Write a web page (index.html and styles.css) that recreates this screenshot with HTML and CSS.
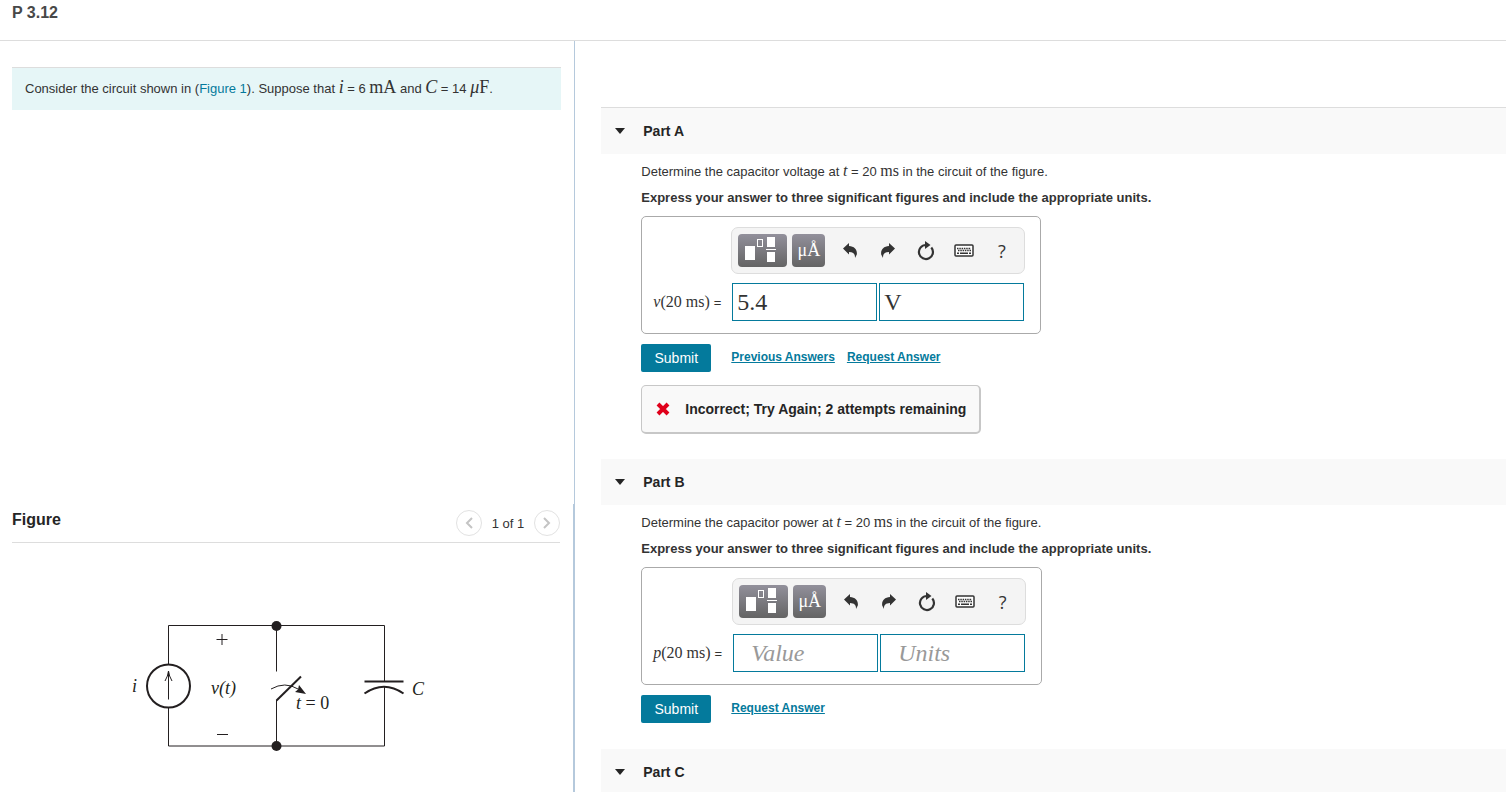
FILE: index.html
```html
<!DOCTYPE html>
<html lang="en">
<head>
    <meta charset="UTF-8">
    <meta name="viewport" content="width=device-width, initial-scale=1.0">
    <title>P 3.12</title>
    <link rel="stylesheet" href="styles.css">
</head>
<body>
    <!-- shared icons -->
    <svg class="sprite" aria-hidden="true">
        <symbol id="icon-templates" viewBox="0 0 49 33">
            <rect x="7" y="12" width="10" height="14" fill="#fff"/>
            <rect x="19.5" y="5.5" width="5" height="7" fill="none" stroke="#fff"/>
            <rect x="29" y="3" width="8" height="10" fill="#fff"/>
            <rect x="28" y="15" width="10" height="1" fill="#fff"/>
            <rect x="29" y="18" width="8" height="10" fill="#fff"/>
        </symbol>
        <symbol id="icon-undo" viewBox="0 0 14 15">
            <path d="M0 5.500 6 0v3c5.500.3 8.500 4 7.800 8.500L12 15c.2-4-1.500-5.800-6-6v2.500z"/>
        </symbol>
        <symbol id="icon-reset" viewBox="0 0 18 20">
            <path d="M14.300 6.500A7 7 0 1 1 9 4" fill="none" stroke="#333" stroke-width="2.200"/>
            <path d="M8 0l5.500 4L8 8z"/>
        </symbol>
        <symbol id="icon-keyboard" viewBox="0 0 20 13">
            <rect x="1" y="1" width="18" height="11" rx="1" fill="#fff" stroke="#333" stroke-width="1.500"/>
            <path d="M3 4.500h14M4 6.500h13" stroke="#333" stroke-width="1.600" stroke-dasharray="1.500 .8"/>
            <path d="M3 9.300h2M6 9.300h8M15 9.300h2" stroke="#333" stroke-width="1.600"/>
        </symbol>
    </svg>

    <header class="page-header">
        <h1>P 3.12</h1>
    </header>

    <main class="workspace">
        <section class="left-pane">
            <div class="problem">
                <p class="intro">Consider the circuit shown in (<a href="#figure">Figure 1</a>). Suppose that <i class="math">i</i> = 6 <span class="math">mA</span> and <i class="math">C</i> = 14 <span class="math"><i>μ</i>F</span>.</p>
            </div>
            <div class="figure-panel" id="figure">
                <div class="figure-head">
                    <h2>Figure</h2>
                    <div class="pager">
                        <button type="button" aria-label="Previous figure"><svg width="8" height="12" viewBox="0 0 8 12"><path d="M7 1 2 6l5 5"/></svg></button>
                        <span>1 of 1</span>
                        <button type="button" aria-label="Next figure"><svg width="8" height="12" viewBox="0 0 8 12"><path d="m1 1 5 5-5 5"/></svg></button>
                    </div>
                </div>
                <svg class="circuit" width="320" height="145" viewBox="0 0 320 145" role="img" aria-label="Current source, switch and capacitor in parallel">
                    <!-- wires -->
                    <path class="wire" d="M48.500 54V15.500h216V71M48.500 97.500v38.500h216V77M156.500 15.500v46M156.500 90v46"/>
                    <circle cx="156.500" cy="16" r="5" fill="#231f20"/>
                    <circle cx="156.500" cy="136" r="5" fill="#231f20"/>
                    <!-- current source -->
                    <circle class="thick" cx="48.500" cy="76" r="21.500"/>
                    <path class="wire" d="M48.500 89.500V61M45 71q3-5 3.500-10 .5 5 3.500 10"/>
                    <!-- switch -->
                    <path class="thick" d="M156.500 90.500 181 66.500"/>
                    <path class="wire" d="M151 79q14-8 27 0"/>
                    <path d="m186 84-11-2 3-2.500 1-4.500z" fill="#231f20"/>
                    <!-- capacitor -->
                    <path class="thick" d="M244.500 71.500h39M244.500 83.500q19.500-13.500 39 0"/>
                    <!-- polarity -->
                    <path class="wire" d="M96.500 29.500h11M102 24v11M97 124.500h11"/>
                    <text x="12" y="82" font-style="italic">i</text>
                    <text x="91" y="84" font-style="italic">v(t)</text>
                    <text x="176" y="99"><tspan font-style="italic">t</tspan> = 0</text>
                    <text x="292" y="85" font-style="italic">C</text>
                </svg>
            </div>
        </section>

        <section class="right-pane">
            <article class="part first">
                <h2 class="part-title"><button type="button">Part A</button></h2>
                <form class="part-body">
                    <p>Determine the capacitor voltage at <i class="math">t</i> = 20 <span class="unit">ms</span> in the circuit of the figure.</p>
                    <p class="instruction">Express your answer to three significant figures and include the appropriate units.</p>
                    <div class="answer-box">
                        <div class="toolbar">
                            <button type="button" class="tool dark wide" aria-label="Templates"><svg width="49" height="33"><use href="#icon-templates"/></svg></button>
                            <button type="button" class="tool dark" aria-label="Symbols">μÅ</button>
                            <button type="button" class="tool" aria-label="Undo"><svg width="14" height="15"><use href="#icon-undo"/></svg></button>
                            <button type="button" class="tool" aria-label="Redo"><svg class="flip" width="14" height="15"><use href="#icon-undo"/></svg></button>
                            <button type="button" class="tool" aria-label="Reset"><svg width="18" height="20"><use href="#icon-reset"/></svg></button>
                            <button type="button" class="tool" aria-label="Keyboard shortcuts"><svg width="20" height="13"><use href="#icon-keyboard"/></svg></button>
                            <button type="button" class="tool help" aria-label="Help">?</button>
                        </div>
                        <label for="valueA"><i>v</i>(20 ms) <span>=</span></label>
                        <div class="fields">
                            <input type="text" id="valueA" value="5.4">
                            <input type="text" aria-label="Units" value="V">
                        </div>
                    </div>
                    <div class="actions">
                        <button type="submit" class="submit">Submit</button>
                        <a href="#previous">Previous Answers</a>
                        <a href="#request">Request Answer</a>
                    </div>
                    <div class="feedback">
                        <svg width="14" height="14" viewBox="0 0 14 14"><path d="m2 2 10 10M12 2 2 12" stroke="#e0001b" stroke-width="4"/></svg>
                        <span>Incorrect; Try Again; 2 attempts remaining</span>
                    </div>
                </form>
            </article>

            <article class="part">
                <h2 class="part-title"><button type="button">Part B</button></h2>
                <form class="part-body">
                    <p>Determine the capacitor power at <i class="math">t</i> = 20 <span class="unit">ms</span> in the circuit of the figure.</p>
                    <p class="instruction">Express your answer to three significant figures and include the appropriate units.</p>
                    <div class="answer-box">
                        <div class="toolbar">
                            <button type="button" class="tool dark wide" aria-label="Templates"><svg width="49" height="33"><use href="#icon-templates"/></svg></button>
                            <button type="button" class="tool dark" aria-label="Symbols">μÅ</button>
                            <button type="button" class="tool" aria-label="Undo"><svg width="14" height="15"><use href="#icon-undo"/></svg></button>
                            <button type="button" class="tool" aria-label="Redo"><svg class="flip" width="14" height="15"><use href="#icon-undo"/></svg></button>
                            <button type="button" class="tool" aria-label="Reset"><svg width="18" height="20"><use href="#icon-reset"/></svg></button>
                            <button type="button" class="tool" aria-label="Keyboard shortcuts"><svg width="20" height="13"><use href="#icon-keyboard"/></svg></button>
                            <button type="button" class="tool help" aria-label="Help">?</button>
                        </div>
                        <label for="valueB"><i>p</i>(20 ms) <span>=</span></label>
                        <div class="fields">
                            <input type="text" id="valueB" placeholder="Value">
                            <input type="text" aria-label="Units" placeholder="Units">
                        </div>
                    </div>
                    <div class="actions">
                        <button type="submit" class="submit">Submit</button>
                        <a href="#request">Request Answer</a>
                    </div>
                </form>
            </article>

            <article class="part">
                <h2 class="part-title"><button type="button">Part C</button></h2>
            </article>
        </section>
    </main>
</body>
</html>
```
FILE: styles.css
```css
* {
    box-sizing: border-box;
}
body {
    margin: 0;
    height: 100vh;
    display: flex;
    flex-direction: column;
    overflow: hidden;
    font-family: "Liberation Sans", Arial, sans-serif;
    font-size: 13px;
    line-height: 18px;
    color: #333;
    background-color: #fff;
}
h1, h2, p {
    margin: 0;
}
button {
    font-family: inherit;
    cursor: pointer;
}
a {
    color: #047a9c;
}
.sprite {
    position: absolute;
    width: 0;
    height: 0;
}
.page-header {
    height: 41px;
    padding: 3px 12px;
    border-bottom: 1px solid #ddd;
}
.page-header h1 {
    font-size: 16px;
    line-height: 20px;
    color: #484848;
}
.workspace {
    flex: 1;
    min-height: 0;
    display: flex;
}

/* left side */
.left-pane {
    width: 38.2%;
    display: flex;
    flex-direction: column;
}
.problem {
    flex: 1;
    padding: 26px 13px 0 12px;
    border-right: 1px solid #b5c9dc;
}
.intro {
    padding: 12px 13px;
    border-top: 1px solid #ddd;
    background-color: #e6f6f7;
}
.intro a {
    text-decoration: none;
}
.math, .unit {
    font-family: "Liberation Serif", "Times New Roman", serif;
    font-size: 16px;
    line-height: 12px;
}
.intro .math {
    font-size: 18px;
}
.figure-panel {
    height: 288px;
    padding: 0 13px 0 12px;
    border-right: 2px solid #b5c9dc;
}
.figure-head {
    display: flex;
    justify-content: space-between;
    height: 39px;
    padding-top: 6px;
    border-bottom: 1px solid #ddd;
}
.figure-head h2 {
    font-size: 16px;
    line-height: 20px;
    color: #252525;
}
.pager {
    display: flex;
    gap: 10px;
    font-size: 13px;
    line-height: 28px;
}
.pager button {
    display: flex;
    align-items: center;
    justify-content: center;
    width: 26px;
    height: 26px;
    padding: 0;
    border: 1px solid #e2e2e2;
    border-radius: 50%;
    background-color: #fff;
}
.pager path {
    fill: none;
    stroke: #c4c4c4;
    stroke-width: 2;
}
.circuit {
    display: block;
    margin: 67px 0 0 108px;
    font-family: "Liberation Serif", "Times New Roman", serif;
    font-size: 18px;
    fill: #231f20;
}
.circuit .wire {
    fill: none;
    stroke: #231f20;
}
.circuit .thick {
    fill: none;
    stroke: #231f20;
    stroke-width: 2;
}

/* right side */
.right-pane {
    flex: 1;
    min-width: 0;
    padding: 66px 0 0 26px;
    overflow: hidden;
}
.part {
    margin-bottom: 26px;
}
.part.first {
    border-top: 1px solid #ddd;
    margin-bottom: 25px;
}
.part-title {
    height: 46px;
    background-color: #f9f9f9;
}
.part-title button {
    display: flex;
    align-items: center;
    gap: 18px;
    height: 46px;
    padding: 0 14px;
    border: none;
    background: none;
    font-size: 14px;
    font-weight: bold;
    color: #252525;
}
.part-title button::before {
    content: "";
    border: 5px solid transparent;
    border-top: 6px solid #252525;
    border-bottom: none;
}
.part-body {
    padding: 9px 40px 0;
}
.part-body p {
    margin-bottom: 8px;
}
.part-body .instruction {
    margin-bottom: 9px;
    font-weight: bold;
}
.answer-box {
    display: grid;
    grid-template-columns: auto 294px;
    align-content: start;
    row-gap: 9px;
    width: fit-content;
    height: 118px;
    padding: 10px 15px 10px 11px;
    border: 1px solid #aaa;
    border-radius: 5px;
}
.toolbar {
    grid-column: 2;
    display: flex;
    align-items: center;
    gap: 5px;
    height: 47px;
    padding: 0 6px;
    border: 1px solid #ddd;
    border-radius: 7px;
    background-color: #f4f4f4;
}
.tool {
    display: flex;
    flex: none;
    align-items: center;
    justify-content: center;
    width: 33px;
    height: 33px;
    padding: 0;
    border: none;
    border-radius: 4px;
    background: none;
    color: #333;
    fill: #333;
}
.tool.dark {
    background: linear-gradient(#92909b, #646464);
    color: #fff;
    font-family: "Liberation Serif", "Times New Roman", serif;
    font-size: 18px;
}
.tool.dark + .tool:not(.dark) {
    margin-left: 3px;
}
.tool.wide {
    width: 49px;
}
.tool.help {
    font-family: "Open Sans", sans-serif;
    font-size: 18px;
}
.flip {
    transform: scaleX(-1);
}
.answer-box label {
    grid-column: 1;
    grid-row: 2;
    align-self: center;
    padding-right: 10px;
    white-space: nowrap;
    font-family: "Liberation Serif", "Times New Roman", serif;
    font-size: 16px;
}
.answer-box label span {
    font-family: "Liberation Sans", Arial, sans-serif;
    font-size: 13px;
}
.fields {
    grid-column: 2;
    grid-row: 2;
    display: flex;
    justify-content: center;
    gap: 2px;
}
.fields input {
    width: 145px;
    height: 38px;
    padding: 0 4px;
    border: 1px solid #047a9c;
    font-family: "Liberation Serif", "Times New Roman", serif;
    font-size: 24px;
    color: #333;
}
.fields input::placeholder {
    padding-left: 13px;
    font-style: italic;
    color: #999;
}
.actions {
    display: flex;
    margin-top: 10px;
    font-size: 12px;
    font-weight: bold;
    line-height: 26px;
}
.actions a {
    margin-right: 12px;
}
.submit {
    width: 70px;
    height: 28px;
    margin-right: 20px;
    padding: 0;
    border: none;
    border-radius: 2px;
    background-color: #047a9c;
    color: #fff;
    font-size: 14px;
}
.feedback {
    display: inline-flex;
    align-items: center;
    gap: 15px;
    height: 49px;
    margin-top: 13px;
    padding: 0 13px 0 14px;
    border: 1px solid #c7c7c7;
    border-width: 1px 2px 2px 1px;
    border-radius: 5px;
    background-color: #f9f9f9;
    font-size: 14px;
    font-weight: bold;
    color: #252525;
    vertical-align: top;
}
```
